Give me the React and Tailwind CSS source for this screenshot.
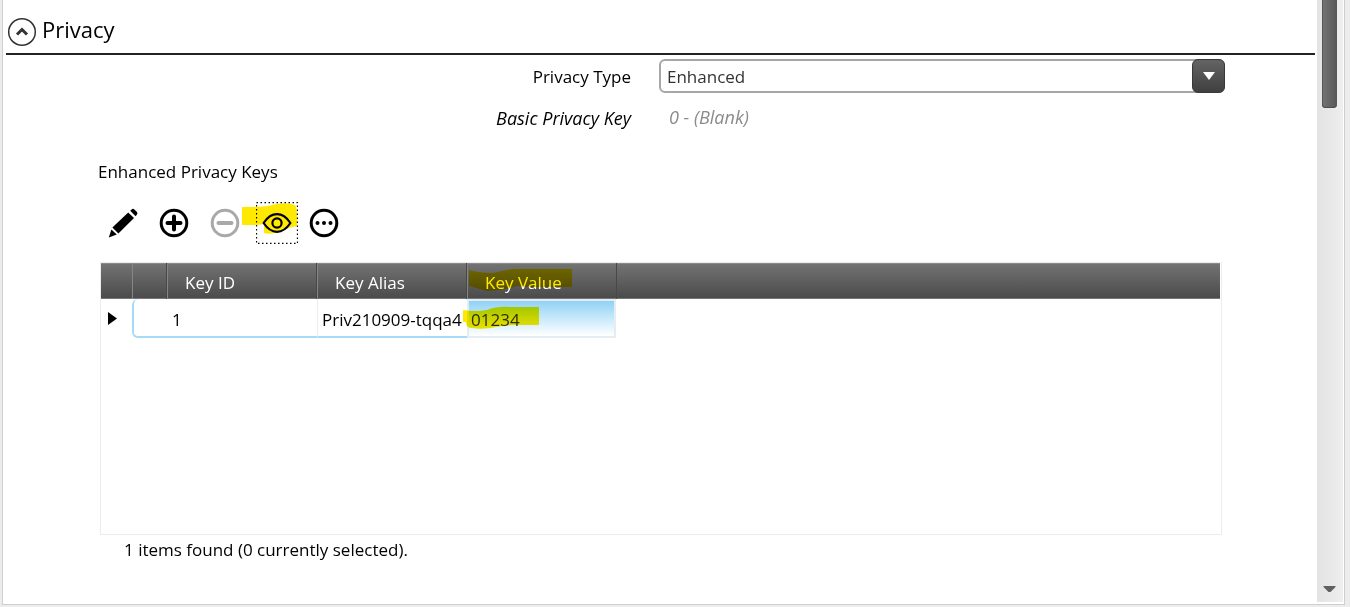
import React from "react";

const iconButton = "flex h-[42px] w-[41px] items-center justify-center text-black";
const headCell =
  "border-l border-[#858585] pt-[3px] pl-[17px] text-left font-normal shadow-[-1px_0_0_#484848]";

function Highlight({ className, viewBox, d }) {
  return (
    <svg
      aria-hidden="true"
      className={`pointer-events-none absolute z-10 mix-blend-multiply ${className}`}
      viewBox={viewBox}
    >
      <path d={d} fill="#ffe900" />
    </svg>
  );
}

function PencilIcon() {
  return (
    <svg width="30" height="30" viewBox="0 0 30 30" fill="currentColor" aria-hidden="true">
      <path d="M.8 29.4 3.4 21.4 8.8 26.6Z" />
      <path d="M4.4 19.6 20.2 4.4 26 10 10.4 25.4Z" />
      <path d="M22.2 2.8 23.6 1.4Q25 .2 26.4 1.4L29 4Q30 5.4 28.8 6.8L27.6 8.2Z" />
    </svg>
  );
}

function CircleIcon({ children }) {
  return (
    <svg
      width="30"
      height="30"
      viewBox="0 0 30 30"
      fill="none"
      stroke="currentColor"
      strokeLinecap="round"
      aria-hidden="true"
    >
      <circle cx="15" cy="15" r="12.8" strokeWidth="3" />
      {children}
    </svg>
  );
}

function EyeIcon() {
  return (
    <svg
      width="30"
      height="30"
      viewBox="0 0 30 30"
      fill="none"
      stroke="currentColor"
      strokeWidth="2.2"
      aria-hidden="true"
    >
      <path d="M1.6 15Q7.5 6.2 15 6.2T28.4 15Q22.5 23.8 15 23.8T1.6 15Z" strokeLinejoin="round" />
      <circle cx="15" cy="15" r="4.6" strokeWidth="2.2" />
    </svg>
  );
}

function Toolbar() {
  return (
    <div className="relative mt-[18px] flex gap-[10px] pl-[4px]" role="toolbar" aria-label="Key actions">
      <button type="button" aria-label="Edit" className={iconButton}>
        <PencilIcon />
      </button>
      <button type="button" aria-label="Add" className={iconButton}>
        <CircleIcon>
          <path d="M8.5 15H21.5M15 8.5V21.5" strokeWidth="4" />
        </CircleIcon>
      </button>
      <button type="button" aria-label="Remove" disabled className="flex h-[42px] w-[41px] items-center justify-center text-[#a9a9a9]">
        <CircleIcon>
          <path d="M8.5 15H21.5" strokeWidth="4" />
        </CircleIcon>
      </button>
      <button type="button" aria-label="Show values" className="relative flex h-[42px] w-[43px] items-center justify-center text-black">
        <svg className="absolute top-0 right-0 h-[42px] w-[42px]" aria-hidden="true">
          <rect x="0.5" y="0.5" width="41" height="41" fill="none" stroke="#000" strokeWidth="1.3" strokeDasharray="1.5 2.5" />
        </svg>
        <EyeIcon />
        <Highlight
          className="top-[1px] -left-[13px] h-[32px] w-[56px]"
          viewBox="0 0 56 32"
          d="M0 4H15Q25 4 34 1Q46-1 53 2Q56 5 55 23Q44 25 36 29Q28 32 22 30V21L15 22H0Z"
        />
      </button>
      <button type="button" aria-label="More" className="-ml-px flex h-[42px] w-[33px] items-center justify-center text-black">
        <CircleIcon>
          <g fill="currentColor" stroke="none">
            <circle cx="8.5" cy="15" r="2" />
            <circle cx="15" cy="15" r="2" />
            <circle cx="21.5" cy="15" r="2" />
          </g>
        </CircleIcon>
      </button>
    </div>
  );
}

function KeysTable() {
  return (
    <div className="mt-[18px] ml-[2px] h-[273px] border border-[#ececec] pr-px">
      <table className="w-full table-fixed border-separate border-spacing-0">
        <colgroup>
          <col className="w-[31px]" />
          <col className="w-[35px]" />
          <col className="w-[150px]" />
          <col className="w-[150px]" />
          <col className="w-[149px]" />
          <col />
        </colgroup>
        <thead>
          <tr className="h-[36px] bg-linear-to-b from-[#747474] to-[#4a4a4a] text-white shadow-[inset_0_1px_0_#8a8a8a,inset_0_-1px_0_#777]">
            <td />
            <td className="border-l border-[#858585]" />
            <th scope="col" className={headCell}>Key ID</th>
            <th scope="col" className={headCell}>Key Alias</th>
            <th scope="col" className={`relative ${headCell}`}>
              Key Value
              <Highlight
                className="top-[6px] left-px h-[23px] w-[103px]"
                viewBox="0 0 103 23"
                d="M0 1Q10 4 24 4Q34 1 45 0H103V18H62L48 17Q32 22 18 22L0 17Z"
              />
            </th>
            <td className="border-l border-[#484848]" />
          </tr>
        </thead>
        <tbody>
          <tr className="h-[39px] text-black">
            <td>
              <svg className="ml-[7px]" width="9" height="13" viewBox="0 0 9 13" aria-hidden="true">
                <path d="M0 0 9 6.5 0 13Z" fill="#000" />
              </svg>
            </td>
            <td colSpan={2} className="rounded-l-md border-b-2 border-l-2 border-[#a4dcf7] pt-[4px] pl-[38px]">1</td>
            <td className="overflow-hidden border-b-2 border-l border-b-[#a4dcf7] border-l-[#ececec] pt-[4px] pl-[4px] whitespace-nowrap">
              Priv210909-tqqa4
            </td>
            <td className="relative border-2 border-[#e6edf2] bg-linear-to-b from-[#8fd2f5] to-white pt-[2px] pl-[2px] text-[#303030]">
              01234
              <Highlight
                className="top-[5px] -left-[6px] h-[24px] w-[77px]"
                viewBox="0 0 77 24"
                d="M0 4Q13 6 24 4Q34 0 48 1H76V19H54Q42 19 33 21Q20 24 9 22Q3 22 3 16H0Z"
              />
            </td>
            <td />
          </tr>
        </tbody>
      </table>
    </div>
  );
}

function Scrollbar() {
  return (
    <aside aria-hidden="true" className="mr-px mb-[2px] flex w-[26px] shrink-0 flex-col items-center justify-between bg-linear-to-r from-[#e3e3e3] to-[#eeeeee] pr-px pb-[9px]">
      <div className="h-[108px] w-[15px] rounded-b bg-linear-to-r from-[#757575] to-[#565656] shadow-[inset_0_-1px_0_#4d4d4d,inset_1px_0_0_#555]" />
      <svg width="13" height="7" viewBox="0 0 12 7">
        <path d="M0 0H12V1L7 6H5L0 1Z" fill="#606060" />
      </svg>
    </aside>
  );
}

export default function App() {
  return (
    <div className="flex min-h-screen bg-[#ececec] pr-[5px] pb-[2px] pl-[2px] font-['Open_Sans','Noto_Sans',sans-serif] text-[17px] leading-6 text-black">
      <div className="flex flex-1 border-r border-b border-l border-[#cfcfcf] bg-white">
        <main className="min-w-0 flex-1">
          <header className="mr-[2px] ml-[3px] flex h-[55px] items-center gap-[5px] border-b-2 border-[#222] pt-[10px] pl-px">
            <button type="button" aria-label="Collapse Privacy" className="shrink-0">
              <svg width="30" height="30" viewBox="0 0 30 30" fill="none" stroke="#333" aria-hidden="true">
                <circle cx="15" cy="15" r="13.3" strokeWidth="1.5" />
                <path d="M10 17.5 15 12.5 20 17.5" strokeWidth="3" />
              </svg>
            </button>
            <h1 className="pb-[6px] text-[22px] leading-8">Privacy</h1>
          </header>

          <form className="grid grid-cols-[628px_1fr] gap-x-[28px] pt-[4px] pr-[92px]">
            <label htmlFor="privacy-type" className="pt-[6px] text-right">Privacy Type</label>
            <div className="relative">
              <select
                id="privacy-type"
                defaultValue="Enhanced"
                className="h-[34px] w-full appearance-none rounded-md border-2 border-[#a6a6a6] bg-white pt-[2px] pl-[6px] text-[#333]"
              >
                <option>Enhanced</option>
                <option>Basic</option>
              </select>
              <span className="pointer-events-none absolute top-0 right-0 flex h-[34px] w-[33px] items-center justify-center rounded-md border border-[#383838] bg-linear-to-b from-[#646464] to-[#404040]">
                <svg width="12" height="8" viewBox="0 0 12 8" aria-hidden="true">
                  <path d="M0 0H12L6 8Z" fill="#fff" />
                </svg>
              </span>
            </div>
            <span className="mt-[13px] text-right text-[18px] italic">Basic Privacy Key</span>
            <output className="mt-[12px] pl-[10px] text-[18px] text-[#8b8b8b] italic">0 - (Blank)</output>
          </form>

          <section className="mt-[30px] mr-[95px] ml-[95px]">
            <h2>Enhanced Privacy Keys</h2>
            <Toolbar />
            <KeysTable />
            <p className="mt-[3px] pl-[26px]">1 items found (0 currently selected).</p>
          </section>
        </main>
        <Scrollbar />
      </div>
    </div>
  );
}
